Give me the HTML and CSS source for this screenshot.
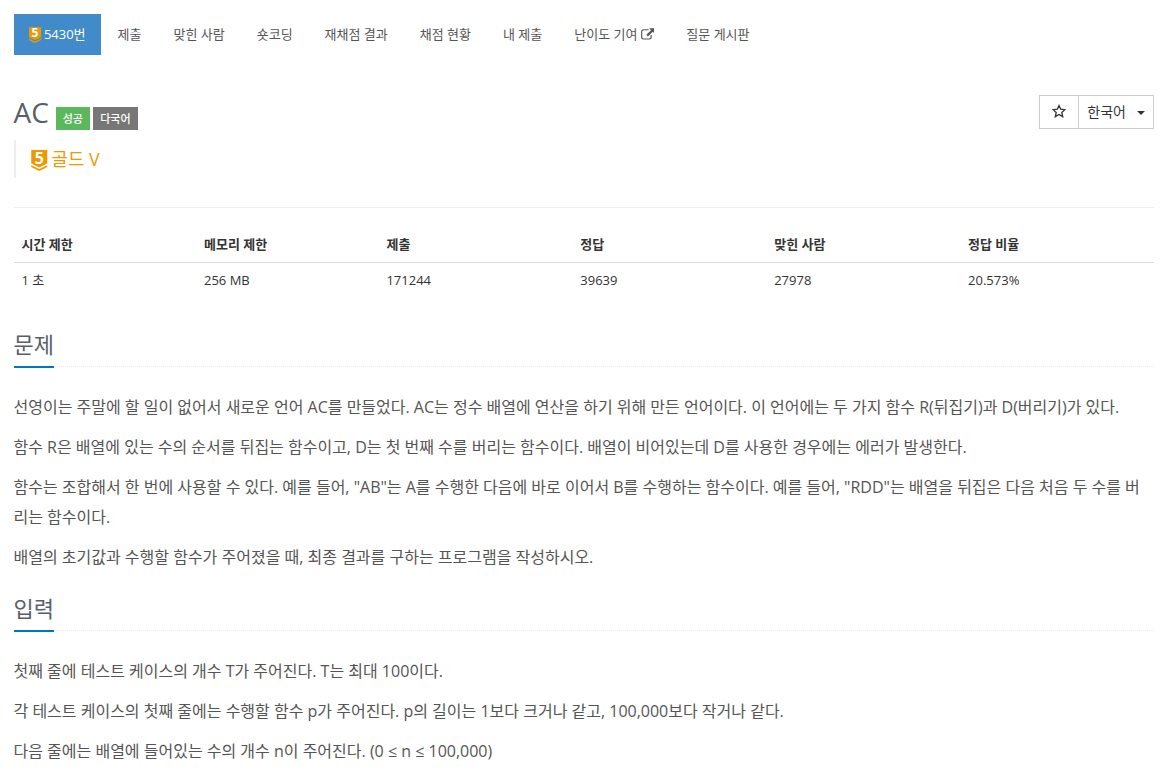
FILE: index.html
```html
<!DOCTYPE html>
<html lang="ko">
<head>
    <meta charset="UTF-8">
    <meta name="viewport" content="width=device-width, initial-scale=1.0">
    <title>5430번: AC</title>
    <link rel="stylesheet" href="styles.css">
</head>
<body>
    <ul class="problem-menu">
        <li class="active"><a href="#"><svg class="tier" viewBox="0 0 16 21"><path fill="#ec9a00" d="M0 0h16v13.500l-8 4-8-4z"/><path fill="#ec9a00" d="M0 15.200l8 3.900 8-3.900v1.900L8 21 0 17.100z"/><text x="8" y="13.500">5</text></svg> 5430번</a></li>
        <li><a href="#">제출</a></li>
        <li><a href="#">맞힌 사람</a></li>
        <li><a href="#">숏코딩</a></li>
        <li><a href="#">재채점 결과</a></li>
        <li><a href="#">채점 현황</a></li>
        <li><a href="#">내 제출</a></li>
        <li><a href="#">난이도 기여 <svg class="external" viewBox="0 0 14 12"><path d="M8 1.600H2.800A2 2 0 0 0 .7 3.600v5.600a2 2 0 0 0 2 2h5.800a2 2 0 0 0 2-2V7" fill="none" stroke="currentColor" stroke-width="1.200"/><path d="M8.500 0H14v5.500l-1.800-1.800L7.200 8.600 5.500 6.900l4.900-4.900z" fill="currentColor"/></svg></a></li>
        <li><a href="#">질문 게시판</a></li>
    </ul>

    <div class="page-header">
        <div class="title-row">
            <h1>AC</h1>
            <span class="label success">성공</span>
            <span class="label multi">다국어</span>
            <div class="btn-group">
                <button class="star" aria-label="즐겨찾기"><svg viewBox="0 0 14 14"><path d="M7 1.500l1.700 3.700 4.200.5-3.100 2.800.9 4.100L7 10.500l-3.700 2.100.9-4.100-3.100-2.800 4.200-.5z"/></svg></button>
                <button class="language">한국어 <span class="caret"></span></button>
            </div>
        </div>
        <blockquote><svg class="tier" viewBox="0 0 16 21"><path fill="#ec9a00" d="M0 0h16v13.500l-8 4-8-4z"/><path fill="#ec9a00" d="M0 15.200l8 3.900 8-3.900v1.900L8 21 0 17.100z"/><text x="8" y="13.500">5</text></svg> 골드 V</blockquote>
    </div>

    <table class="problem-info">
        <thead>
            <tr><th>시간 제한</th><th>메모리 제한</th><th>제출</th><th>정답</th><th>맞힌 사람</th><th>정답 비율</th></tr>
        </thead>
        <tbody>
            <tr><td>1 초</td><td>256 MB</td><td>171244</td><td>39639</td><td>27978</td><td>20.573%</td></tr>
        </tbody>
    </table>

    <section>
        <div class="headline"><h2>문제</h2></div>
        <p>선영이는 주말에 할 일이 없어서 새로운 언어 AC를 만들었다. AC는 정수 배열에 연산을 하기 위해 만든 언어이다. 이 언어에는 두 가지 함수 R(뒤집기)과 D(버리기)가 있다.</p>
        <p>함수 R은 배열에 있는 수의 순서를 뒤집는 함수이고, D는 첫 번째 수를 버리는 함수이다. 배열이 비어있는데 D를 사용한 경우에는 에러가 발생한다.</p>
        <p>함수는 조합해서 한 번에 사용할 수 있다. 예를 들어, "AB"는 A를 수행한 다음에 바로 이어서 B를 수행하는 함수이다. 예를 들어, "RDD"는 배열을 뒤집은 다음 처음 두 수를 버리는 함수이다.</p>
        <p>배열의 초기값과 수행할 함수가 주어졌을 때, 최종 결과를 구하는 프로그램을 작성하시오.</p>
    </section>

    <section>
        <div class="headline"><h2>입력</h2></div>
        <p>첫째 줄에 테스트 케이스의 개수 T가 주어진다. T는 최대 100이다.</p>
        <p>각 테스트 케이스의 첫째 줄에는 수행할 함수 p가 주어진다. p의 길이는 1보다 크거나 같고, 100,000보다 작거나 같다.</p>
        <p>다음 줄에는 배열에 들어있는 수의 개수 n이 주어진다. (0 ≤ n ≤ 100,000)</p>
    </section>
</body>
</html>
```

FILE: styles.css
```css
* {
    box-sizing: border-box;
}

body {
    margin: 0;
    padding: 14px 11px 0 13.5px;
    height: 771px;
    overflow: hidden;
    font-family: "Open Sans", "Noto Sans CJK KR", sans-serif;
    font-size: 13px;
    line-height: 20px;
    color: #333;
    background: #fff;
}

.problem-menu {
    display: flex;
    gap: 2px;
    margin: 0;
    padding: 0;
    list-style: none;
}

.problem-menu a {
    display: block;
    height: 41px;
    padding: 10px 15px;
    font-size: 13px;
    color: #555;
    text-decoration: none;
    white-space: nowrap;
}

.problem-menu .active a {
    color: #fff;
    background: #428bca;
}

.tier {
    width: 12px;
    height: 16px;
    vertical-align: -4px;
    overflow: visible;
}

.tier text {
    font: bold 16px "Open Sans", sans-serif;
    text-anchor: middle;
    fill: #fff;
}

.external {
    width: 13.5px;
    height: 12px;
    vertical-align: -1px;
}

.page-header {
    height: 153px;
    padding-top: 40px;
    border-bottom: 1px solid #eee;
}

.title-row {
    display: flex;
    height: 35px;
}

h1 {
    margin: 0 7px 0 0;
    font-size: 28px;
    font-weight: 400;
    line-height: 34px;
    color: #585f69;
}

.label {
    height: 23px;
    margin: 12px 3px 0 0;
    font-size: 11px;
    font-weight: 500;
    line-height: 23px;
    text-align: center;
    white-space: nowrap;
    color: #fff;
}

.success {
    width: 34px;
    background: #5cb85c;
}

.multi {
    width: 45px;
    background: #777;
}

.btn-group {
    display: flex;
    height: 34px;
    margin-left: auto;
    border: 1px solid #ccc;
}

.btn-group button {
    padding: 0;
    border: 0;
    background: #fff;
    font: 14px/32px "Open Sans", "Noto Sans CJK KR", sans-serif;
    color: #333;
}

.btn-group .star {
    width: 39px;
    border-right: 1px solid #ccc;
}

.star svg {
    width: 14px;
    height: 14px;
    vertical-align: -1px;
    fill: none;
    stroke: #333;
    stroke-width: 1.3;
}

.btn-group .language {
    width: 74px;
}

.caret {
    display: inline-block;
    margin-left: 7px;
    border: 4px solid transparent;
    border-top-color: #333;
    border-bottom: 0;
    vertical-align: 2px;
}

blockquote {
    height: 38px;
    margin: 10px 0 0;
    padding-left: 15px;
    border-left: 2px solid #eee;
    font-size: 17.8px;
    line-height: 38px;
    color: #ec9a00;
}

blockquote .tier {
    width: 16.5px;
    height: 21px;
    vertical-align: -5px;
}

.problem-info {
    width: 100%;
    margin-top: 19px;
    border-collapse: collapse;
    table-layout: fixed;
}

.problem-info th,
.problem-info td {
    height: 35px;
    padding: 0 8px;
    text-align: left;
}

.problem-info th {
    width: 17%;
    border-bottom: 1px solid #ddd;
}

.problem-info th:nth-child(-n+2) {
    width: 16%;
}

section {
    margin-top: 31px;
}

section + section {
    margin-top: 20px;
}

.headline {
    height: 39px;
    margin-bottom: 25px;
    border-bottom: 1px dotted #e4e9f0;
}

h2 {
    display: inline-block;
    height: 40px;
    margin: 0;
    border-bottom: 2px solid #0076c0;
    font-size: 22px;
    font-weight: 400;
    line-height: 33px;
    color: #585f69;
}

p {
    margin: 0 0 10px;
    font-size: 16px;
    line-height: 30px;
    color: #555;
    word-break: break-all;
}
```
